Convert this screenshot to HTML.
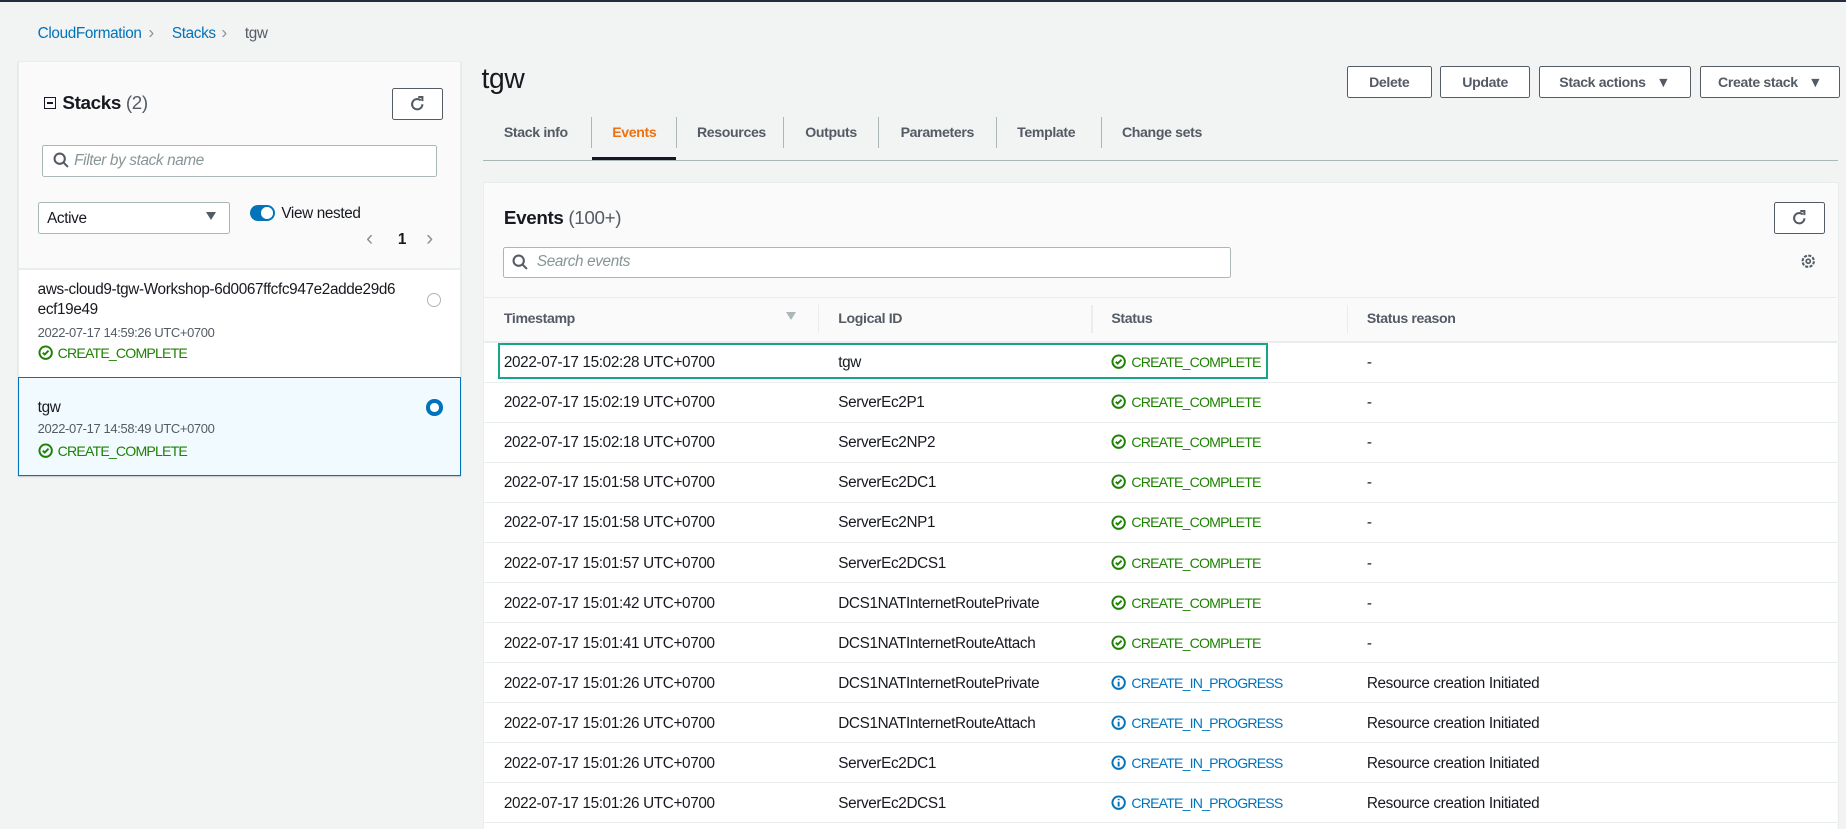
<!DOCTYPE html>
<html><head><meta charset="utf-8"><style>
*{box-sizing:border-box;margin:0;padding:0}
html,body{width:1846px;height:829px;overflow:hidden;background:#f2f3f3}
#r{zoom:1.1773;position:relative;width:1568px;height:704px;font-family:"Liberation Sans",sans-serif;color:#16191f;font-size:13px;letter-spacing:-0.3px}
.a{position:absolute;white-space:nowrap}
.btn{position:absolute;border:1px solid #545b64;background:#fff;height:27px;font-weight:bold;color:#545b64;font-size:12px;display:flex;align-items:center;justify-content:center;border-radius:2px}
.tab{position:absolute;top:105px;font-weight:bold;color:#545b64;font-size:12px}
.tsep{position:absolute;top:99px;width:1px;height:27px;background:#aab7b8}
.row{position:absolute;left:411px;width:1149px;height:34px;background:#fff;border-bottom:1px solid #eaeded}
.row span{position:absolute;top:10px;white-space:nowrap}
.ok{color:#1d8102;font-size:12px;letter-spacing:-0.7px}.ip{color:#0073bb;font-size:12px;letter-spacing:-0.7px}
.ic{display:inline-block;width:13px;height:13px;vertical-align:-2px;margin-right:4px}
</style></head><body><div id="r">
<div class="a" style="left:0;top:0;width:1568px;height:2px;background:#232f3e"></div>
<div class="a" style="left:32px;top:21px;color:#0073bb">CloudFormation</div>
<div class="a" style="left:126px;top:19px;color:#879596;font-size:15px">›</div>
<div class="a" style="left:146px;top:21px;color:#0073bb">Stacks</div>
<div class="a" style="left:188px;top:19px;color:#879596;font-size:15px">›</div>
<div class="a" style="left:208px;top:21px;color:#545b64">tgw</div>

<!-- left panel -->
<div class="a" style="left:15px;top:52px;width:377px;height:352px;background:#fafafa;border:1px solid #eaeded;box-shadow:0 1px 1px rgba(0,28,36,.2)"></div>
<div class="a" style="left:37px;top:82px;width:11px;height:11px;border:1.5px solid #16191f"></div>
<div class="a" style="left:40px;top:87px;width:5px;height:1.5px;background:#16191f"></div>
<div class="a" style="left:53px;top:78px;font-size:16px;font-weight:bold">Stacks <span style="font-weight:normal;color:#545b64">(2)</span></div>
<div class="btn" style="left:333px;top:75px;width:43px;height:27px">
<svg width="14" height="14" viewBox="0 0 16 16"><path d="M13 8a5 5 0 1 1-1.6-3.7" fill="none" stroke="#545b64" stroke-width="2"/><path d="M9 1h4v4" fill="none" stroke="#545b64" stroke-width="2"/></svg></div>
<div class="a" style="left:36px;top:123px;width:335px;height:27px;background:#fff;border:1px solid #aab7b8;border-radius:2px"></div>
<svg class="a" style="left:45px;top:129px" width="14" height="14" viewBox="0 0 16 16"><circle cx="6.5" cy="6.5" r="5" fill="none" stroke="#545b64" stroke-width="2"/><path d="M10 10l4.5 4.5" stroke="#545b64" stroke-width="2"/></svg>
<div class="a" style="left:63px;top:129px;color:#879596;font-style:italic">Filter by stack name</div>
<div class="a" style="left:32px;top:172px;width:163px;height:27px;background:#fff;border:1px solid #aab7b8;border-radius:2px"></div>
<div class="a" style="left:40px;top:178px">Active</div>
<div class="a" style="left:175px;top:180px;width:0;height:0;border-left:5px solid transparent;border-right:5px solid transparent;border-top:7px solid #545b64"></div>
<div class="a" style="left:212px;top:174px;width:22px;height:14px;border-radius:7px;background:#0073bb"></div>
<div class="a" style="left:222px;top:176px;width:10px;height:10px;border-radius:5px;background:#fff"></div>
<div class="a" style="left:239px;top:174px">View nested</div>
<div class="a" style="left:311px;top:193px;color:#879596;font-size:18px">‹</div>
<div class="a" style="left:338px;top:196px;font-weight:bold">1</div>
<div class="a" style="left:362px;top:193px;color:#879596;font-size:18px">›</div>
<div class="a" style="left:16px;top:228px;width:375px;height:1px;background:#eaeded"></div>
<div class="a" style="left:16px;top:229px;width:375px;height:91px;background:#fff"></div>
<div class="a" style="left:32px;top:238px;line-height:17px">aws-cloud9-tgw-Workshop-6d0067ffcfc947e2adde29d6<br>ecf19e49</div>
<div class="a" style="left:32px;top:276px;font-size:11px;color:#545b64">2022-07-17 14:59:26 UTC+0700</div>
<div class="a ok" style="left:32px;top:293px"><svg class="ic" viewBox="0 0 16 16"><circle cx="8" cy="8" r="6.5" fill="none" stroke="#1d8102" stroke-width="2"/><path d="M5 8l2 2 4-4" fill="none" stroke="#1d8102" stroke-width="2"/></svg>CREATE_COMPLETE</div>
<div class="a" style="left:363px;top:249px;width:12px;height:12px;border-radius:6px;border:1px solid #aab7b8;background:#fff"></div>
<div class="a" style="left:15px;top:320px;width:377px;height:84px;background:#f1faff;border:1px solid #0073bb"></div>
<div class="a" style="left:32px;top:339px">tgw</div>
<div class="a" style="left:32px;top:358px;font-size:11px;color:#545b64">2022-07-17 14:58:49 UTC+0700</div>
<div class="a ok" style="left:32px;top:376px"><svg class="ic" viewBox="0 0 16 16"><circle cx="8" cy="8" r="6.5" fill="none" stroke="#1d8102" stroke-width="2"/><path d="M5 8l2 2 4-4" fill="none" stroke="#1d8102" stroke-width="2"/></svg>CREATE_COMPLETE</div>
<div class="a" style="left:362px;top:339px;width:14px;height:14px;border-radius:7px;border:4px solid #0073bb;background:#fff"></div>

<!-- title / buttons -->
<div class="a" style="left:409px;top:53px;font-size:24px">tgw</div>
<div class="btn" style="left:1144px;top:56px;width:72px">Delete</div>
<div class="btn" style="left:1223px;top:56px;width:77px">Update</div>
<div class="btn" style="left:1307px;top:56px;width:129px">Stack actions&nbsp;&nbsp;&nbsp;▼</div>
<div class="btn" style="left:1444px;top:56px;width:119px">Create stack&nbsp;&nbsp;&nbsp;▼</div>

<div class="tab" style="left:428px">Stack info</div>
<div class="tsep" style="left:502px"></div>
<div class="tab" style="left:520px;color:#ec7211">Events</div>
<div class="tsep" style="left:574px"></div>
<div class="tab" style="left:592px">Resources</div>
<div class="tsep" style="left:665px"></div>
<div class="tab" style="left:684px">Outputs</div>
<div class="tsep" style="left:746px"></div>
<div class="tab" style="left:765px">Parameters</div>
<div class="tsep" style="left:846px"></div>
<div class="tab" style="left:864px">Template</div>
<div class="tsep" style="left:935px"></div>
<div class="tab" style="left:953px">Change sets</div>
<div class="a" style="left:410px;top:136px;width:1151px;height:1px;background:#aab7b8"></div>
<div class="a" style="left:503px;top:133px;width:71px;height:3px;background:#16191f"></div>

<!-- events -->
<div class="a" style="left:410px;top:155px;width:1152px;height:560px;background:#fafafa;border:1px solid #eaeded"></div>
<div class="a" style="left:428px;top:176px;font-size:16px;font-weight:bold">Events <span style="font-weight:normal;color:#545b64">(100+)</span></div>
<div class="btn" style="left:1507px;top:172px;width:43px">
<svg width="14" height="14" viewBox="0 0 16 16"><path d="M13 8a5 5 0 1 1-1.6-3.7" fill="none" stroke="#545b64" stroke-width="2"/><path d="M9 1h4v4" fill="none" stroke="#545b64" stroke-width="2"/></svg></div>
<div class="a" style="left:427px;top:210px;width:619px;height:26px;background:#fff;border:1px solid #aab7b8;border-radius:2px"></div>
<svg class="a" style="left:435px;top:216px" width="14" height="14" viewBox="0 0 16 16"><circle cx="6.5" cy="6.5" r="5" fill="none" stroke="#545b64" stroke-width="2"/><path d="M10 10l4.5 4.5" stroke="#545b64" stroke-width="2"/></svg>
<div class="a" style="left:456px;top:215px;color:#879596;font-style:italic">Search events</div>
<svg class="a" style="left:1529px;top:215px" width="14" height="14" viewBox="0 0 16 16"><circle cx="8" cy="8" r="5.5" fill="none" stroke="#545b64" stroke-width="2" stroke-dasharray="3 1.3"/><circle cx="8" cy="8" r="2" fill="none" stroke="#545b64" stroke-width="1.6"/></svg>
<div class="a" style="left:411px;top:252px;width:1149px;height:1px;background:#eaeded"></div>
<div class="a" style="left:428px;top:263px;font-weight:bold;color:#545b64;font-size:12px">Timestamp</div>
<div class="a" style="left:668px;top:265px;border-left:5px solid transparent;border-right:5px solid transparent;border-top:7px solid #aab7b8"></div>
<div class="a" style="left:695px;top:259px;width:1px;height:24px;background:#eaeded"></div>
<div class="a" style="left:712px;top:263px;font-weight:bold;color:#545b64;font-size:12px">Logical ID</div>
<div class="a" style="left:927px;top:259px;width:1px;height:24px;background:#eaeded"></div>
<div class="a" style="left:944px;top:263px;font-weight:bold;color:#545b64;font-size:12px">Status</div>
<div class="a" style="left:1144px;top:259px;width:1px;height:24px;background:#eaeded"></div>
<div class="a" style="left:1161px;top:263px;font-weight:bold;color:#545b64;font-size:12px">Status reason</div>
<div class="a" style="left:411px;top:290px;width:1149px;height:1px;background:#eaeded"></div>

<div class="row" style="top:291px"><span style="left:17px">2022-07-17 15:02:28 UTC+0700</span><span style="left:301px">tgw</span><span class="ok" style="left:533px"><svg class="ic" viewBox="0 0 16 16"><circle cx="8" cy="8" r="6.5" fill="none" stroke="#1d8102" stroke-width="2"/><path d="M5 8l2 2 4-4" fill="none" stroke="#1d8102" stroke-width="2"/></svg>CREATE_COMPLETE</span><span style="left:750px">-</span></div>
<div class="row" style="top:325px"><span style="left:17px">2022-07-17 15:02:19 UTC+0700</span><span style="left:301px">ServerEc2P1</span><span class="ok" style="left:533px"><svg class="ic" viewBox="0 0 16 16"><circle cx="8" cy="8" r="6.5" fill="none" stroke="#1d8102" stroke-width="2"/><path d="M5 8l2 2 4-4" fill="none" stroke="#1d8102" stroke-width="2"/></svg>CREATE_COMPLETE</span><span style="left:750px">-</span></div>
<div class="row" style="top:359px"><span style="left:17px">2022-07-17 15:02:18 UTC+0700</span><span style="left:301px">ServerEc2NP2</span><span class="ok" style="left:533px"><svg class="ic" viewBox="0 0 16 16"><circle cx="8" cy="8" r="6.5" fill="none" stroke="#1d8102" stroke-width="2"/><path d="M5 8l2 2 4-4" fill="none" stroke="#1d8102" stroke-width="2"/></svg>CREATE_COMPLETE</span><span style="left:750px">-</span></div>
<div class="row" style="top:393px"><span style="left:17px">2022-07-17 15:01:58 UTC+0700</span><span style="left:301px">ServerEc2DC1</span><span class="ok" style="left:533px"><svg class="ic" viewBox="0 0 16 16"><circle cx="8" cy="8" r="6.5" fill="none" stroke="#1d8102" stroke-width="2"/><path d="M5 8l2 2 4-4" fill="none" stroke="#1d8102" stroke-width="2"/></svg>CREATE_COMPLETE</span><span style="left:750px">-</span></div>
<div class="row" style="top:427px"><span style="left:17px">2022-07-17 15:01:58 UTC+0700</span><span style="left:301px">ServerEc2NP1</span><span class="ok" style="left:533px"><svg class="ic" viewBox="0 0 16 16"><circle cx="8" cy="8" r="6.5" fill="none" stroke="#1d8102" stroke-width="2"/><path d="M5 8l2 2 4-4" fill="none" stroke="#1d8102" stroke-width="2"/></svg>CREATE_COMPLETE</span><span style="left:750px">-</span></div>
<div class="row" style="top:461px"><span style="left:17px">2022-07-17 15:01:57 UTC+0700</span><span style="left:301px">ServerEc2DCS1</span><span class="ok" style="left:533px"><svg class="ic" viewBox="0 0 16 16"><circle cx="8" cy="8" r="6.5" fill="none" stroke="#1d8102" stroke-width="2"/><path d="M5 8l2 2 4-4" fill="none" stroke="#1d8102" stroke-width="2"/></svg>CREATE_COMPLETE</span><span style="left:750px">-</span></div>
<div class="row" style="top:495px"><span style="left:17px">2022-07-17 15:01:42 UTC+0700</span><span style="left:301px">DCS1NATInternetRoutePrivate</span><span class="ok" style="left:533px"><svg class="ic" viewBox="0 0 16 16"><circle cx="8" cy="8" r="6.5" fill="none" stroke="#1d8102" stroke-width="2"/><path d="M5 8l2 2 4-4" fill="none" stroke="#1d8102" stroke-width="2"/></svg>CREATE_COMPLETE</span><span style="left:750px">-</span></div>
<div class="row" style="top:529px"><span style="left:17px">2022-07-17 15:01:41 UTC+0700</span><span style="left:301px">DCS1NATInternetRouteAttach</span><span class="ok" style="left:533px"><svg class="ic" viewBox="0 0 16 16"><circle cx="8" cy="8" r="6.5" fill="none" stroke="#1d8102" stroke-width="2"/><path d="M5 8l2 2 4-4" fill="none" stroke="#1d8102" stroke-width="2"/></svg>CREATE_COMPLETE</span><span style="left:750px">-</span></div>
<div class="row" style="top:563px"><span style="left:17px">2022-07-17 15:01:26 UTC+0700</span><span style="left:301px">DCS1NATInternetRoutePrivate</span><span class="ip" style="left:533px"><svg class="ic" viewBox="0 0 16 16"><circle cx="8" cy="8" r="6.5" fill="none" stroke="#0073bb" stroke-width="2"/><path d="M8 7v5M8 4v1.5" stroke="#0073bb" stroke-width="2"/></svg>CREATE_IN_PROGRESS</span><span style="left:750px">Resource creation Initiated</span></div>
<div class="row" style="top:597px"><span style="left:17px">2022-07-17 15:01:26 UTC+0700</span><span style="left:301px">DCS1NATInternetRouteAttach</span><span class="ip" style="left:533px"><svg class="ic" viewBox="0 0 16 16"><circle cx="8" cy="8" r="6.5" fill="none" stroke="#0073bb" stroke-width="2"/><path d="M8 7v5M8 4v1.5" stroke="#0073bb" stroke-width="2"/></svg>CREATE_IN_PROGRESS</span><span style="left:750px">Resource creation Initiated</span></div>
<div class="row" style="top:631px"><span style="left:17px">2022-07-17 15:01:26 UTC+0700</span><span style="left:301px">ServerEc2DC1</span><span class="ip" style="left:533px"><svg class="ic" viewBox="0 0 16 16"><circle cx="8" cy="8" r="6.5" fill="none" stroke="#0073bb" stroke-width="2"/><path d="M8 7v5M8 4v1.5" stroke="#0073bb" stroke-width="2"/></svg>CREATE_IN_PROGRESS</span><span style="left:750px">Resource creation Initiated</span></div>
<div class="row" style="top:665px"><span style="left:17px">2022-07-17 15:01:26 UTC+0700</span><span style="left:301px">ServerEc2DCS1</span><span class="ip" style="left:533px"><svg class="ic" viewBox="0 0 16 16"><circle cx="8" cy="8" r="6.5" fill="none" stroke="#0073bb" stroke-width="2"/><path d="M8 7v5M8 4v1.5" stroke="#0073bb" stroke-width="2"/></svg>CREATE_IN_PROGRESS</span><span style="left:750px">Resource creation Initiated</span></div>
<div class="row" style="top:699px"></div>

<div class="a" style="left:423px;top:291px;width:654px;height:31px;border:2px solid #16a589"></div>
</div></body></html>
